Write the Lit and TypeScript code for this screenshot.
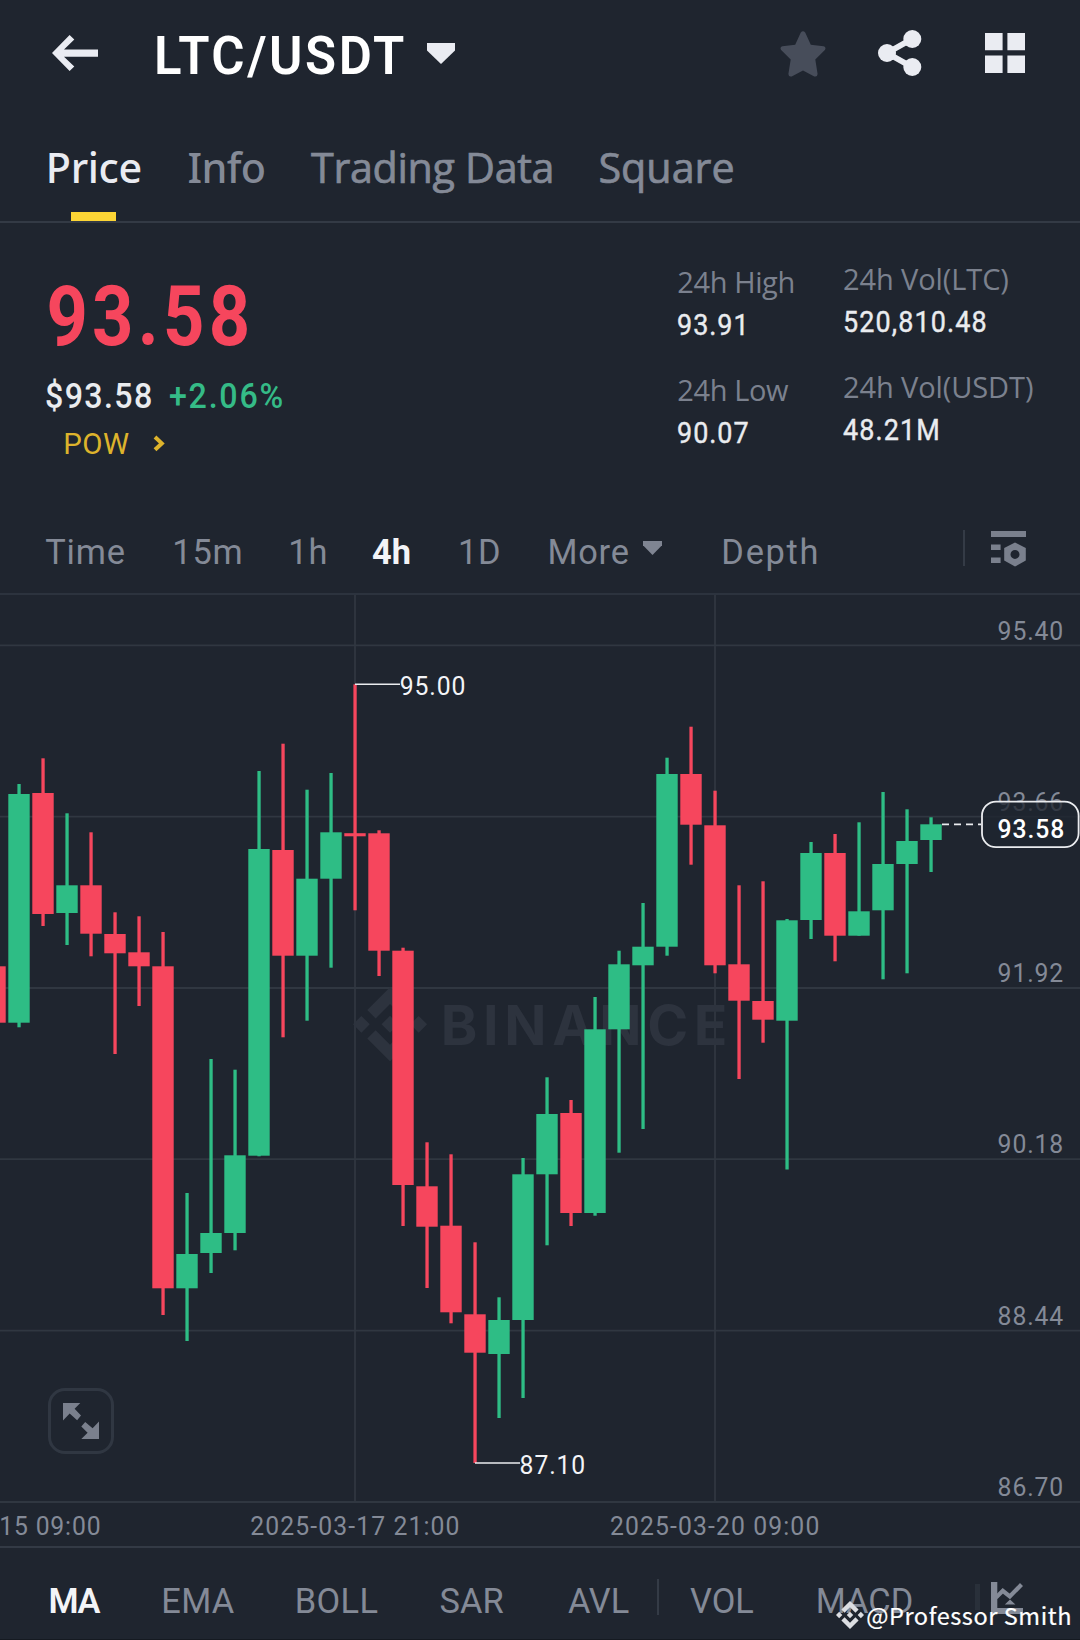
import { LitElement, html, svg, css } from "lit";
import { customElement, state } from "lit/decorators.js";
import { classMap } from "lit/directives/class-map.js";

type Candle = [up: 0 | 1, high: number, top: number, bottom: number, low: number];

const FIRST_X = -5;
const STEP = 24;

const CANDLES: Candle[] = [
  [0, 966.3, 966.3, 1022.7, 1022.7],
  [1, 784, 794, 1022.7, 1027.3],
  [0, 758.3, 793, 914, 926],
  [1, 813.3, 885.3, 913, 945],
  [0, 832.3, 885.3, 933.7, 956.3],
  [0, 912.3, 934, 953.3, 1054],
  [0, 916.3, 952.3, 966.3, 1006],
  [0, 932, 966.3, 1288.3, 1315],
  [1, 1193, 1254, 1288.3, 1341],
  [1, 1059, 1233, 1253, 1273],
  [1, 1069.7, 1155.3, 1233, 1250.3],
  [1, 771, 849, 1155.7, 1156.3],
  [0, 743.7, 850, 955.7, 1037.3],
  [1, 789.7, 878.7, 955.7, 1020.7],
  [1, 773, 832.3, 878.7, 967.7],
  [0, 684.3, 833.2, 836.3, 910.3],
  [0, 830.3, 833.3, 950.7, 976],
  [0, 947.7, 950.7, 1185, 1226],
  [0, 1142.3, 1186.3, 1226.7, 1288],
  [0, 1154.3, 1225.7, 1312.3, 1323.3],
  [0, 1242.3, 1314.3, 1352.7, 1463],
  [1, 1297.3, 1320, 1354, 1418],
  [1, 1158, 1174.3, 1320, 1398],
  [1, 1077.3, 1114, 1174.3, 1245.3],
  [0, 1100, 1113, 1213, 1226],
  [1, 997, 1029.3, 1213, 1215.7],
  [1, 950.7, 964.3, 1029.3, 1152.7],
  [1, 903, 946.7, 965.3, 1129],
  [1, 757.7, 774, 946.7, 955.7],
  [0, 726.7, 774, 824.7, 864.7],
  [0, 790.7, 825.3, 965.3, 973.3],
  [0, 885.3, 964.3, 1000.7, 1079],
  [0, 881.3, 1001, 1019.7, 1042.7],
  [1, 919, 920.3, 1020.7, 1169.5],
  [1, 842, 853, 920, 939],
  [0, 834, 853, 935.7, 961.3],
  [1, 822.3, 911.3, 935.7, 935.7],
  [1, 792, 864, 910.3, 979.3],
  [1, 809.3, 841, 864, 973.3],
  [1, 817.3, 824.3, 840, 872],
];

const SCALE: [string, number][] = [
  ["95.40", 645.3],
  ["93.66", 816.7],
  ["91.92", 988],
  ["90.18", 1159.2],
  ["88.44", 1330.7],
  ["86.70", 1502],
];

const logo = svg`
  <path d="M38.7 53.2 63.3 28.6 87.9 53.2 102.2 38.9 63.3 0 24.4 38.9zM0 63.3 14.3 49 28.6 63.3 14.3 77.6zM38.7 73.4 63.3 98 87.9 73.4 102.2 87.7 63.3 126.6 24.4 87.7zM98 63.3 112.3 49 126.6 63.3 112.3 77.6zM77.8 63.3 63.3 48.8 48.8 63.3 63.3 77.8z" />
`;

@customElement("candle-chart")
export class CandleChart extends LitElement {
  static styles = css`
    :host {
      display: block;
      position: relative;
      height: 951px;
      border-bottom: 2px solid #333a45;
    }
    .plot {
      display: block;
      width: 1080px;
      height: 951px;
      font-family: Roboto, "Liberation Sans", sans-serif;
      font-size: 26.6px;
      letter-spacing: 0.95px;
    }
    .grid { stroke: #303741; stroke-width: 1.8; fill: none; }
    .mark { fill: #2d333e; }
    .mark-text {
      fill: #2d333e;
      font: 700 55.4px Inter, "Open Sans", sans-serif;
      letter-spacing: 5.7px;
    }
    .up { fill: #2ebd85; }
    .down { fill: #f6465d; }
    .scale, .date { fill: #848a97; }
    .date { letter-spacing: 1.2px; }
    .date.edge { letter-spacing: 0.9px; }
    .lead { stroke: #eaecef; stroke-width: 1.6; fill: none; }
    .dash { stroke-dasharray: 7 5; }
    .peak { fill: #f3f4f7; }
    .tag { fill: #1f252f; fill-opacity: 0.78; stroke: #eaecef; stroke-width: 1.8; }
    .last { fill: #fff; font-weight: 500; }
    .expand {
      position: absolute;
      left: 48px;
      top: 793px;
      width: 66px;
      height: 66px;
      box-sizing: border-box;
      padding: 0;
      border: 3px solid #303742;
      border-radius: 17px;
      background: #1f252f;
      display: flex;
      align-items: center;
      justify-content: center;
    }
    .expand svg { width: 36px; height: 36px; fill: #7a808d; }
  `;

  private candle([up, high, top, bottom, low]: Candle, i: number) {
    const x = FIRST_X + i * STEP;
    return svg`<g class=${up ? "up" : "down"}>
      <rect x=${x - 1.6} y=${high} width="3.3" height=${low - high} />
      <rect x=${x - 10.7} y=${top} width="21.4" height=${bottom - top} />
    </g>`;
  }

  /** Axis numerals are set slightly condensed. */
  private numerals(kind: string, x: number, y: number, label: string) {
    return svg`<text class=${kind} transform="translate(${x} ${y}) scale(0.93 1)">${label}</text>`;
  }

  render() {
    return html`
      <svg class="plot" viewBox="0 595 1080 951">
        <path class="grid" d="M355 595V1502M715 595V1502" />
        ${SCALE.map(([, y]) => svg`<path class="grid" d="M0 ${y}H1080" />`)}
        <g class="mark" transform="translate(353 987.3) scale(0.585)">${logo}</g>
        <text class="mark-text" x="440.7" y="1044.7">BINANCE</text>
        ${CANDLES.map((c, i) => this.candle(c, i))}
        ${SCALE.map(([label, y]) => this.numerals("scale", 997.6, y - 5.8, label))}
        <path class="lead" d="M355 684.3H400M475 1463H520" />
        ${this.numerals("peak", 399.8, 695, "95.00")}
        ${this.numerals("peak", 519.6, 1474.3, "87.10")}
        <path class="lead dash" d="M942 824.4H981" />
        <rect class="tag" x="982" y="801.6" width="96.6" height="45.6" rx="14" />
        ${this.numerals("last", 997.6, 838, "93.58")}
        ${this.numerals("date edge", -0.8, 1535, "15 09:00")}
        ${this.numerals("date", 250.2, 1535, "2025-03-17 21:00")}
        ${this.numerals("date", 610, 1535, "2025-03-20 09:00")}
      </svg>
      <button class="expand" aria-label="Expand">
        <svg viewBox="0 0 36 36">
          <path d="M0 0H17.3L11.6 5.7 18 12.6 14.1 17.3 6.7 10.6 0 17.6zM36 36H18.3L24.6 29.8 18.3 23.4 22.2 19 29.6 25.2 36 18.4z" />
        </svg>
      </button>
    `;
  }
}

@customElement("app-root")
export class AppRoot extends LitElement {
  static styles = css`
    :host {
      display: flex;
      flex-direction: column;
      position: relative;
      width: 1080px;
      height: 1640px;
      box-sizing: border-box;
      overflow: hidden;
      background: #1f252f;
      color: #eaecef;
      font-family: Roboto, "Liberation Sans", sans-serif;
      border-bottom: 1px solid #151a21;
    }
    svg { display: block; }
    .header {
      display: grid;
      grid-template-columns: 101.5px 273.5px 353px 97.5px 107.5px 1fr;
      align-items: center;
      height: 106px;
      padding-left: 52px;
      fill: #eaecf2;
    }
    .pair {
      margin: 5px 0 0;
      font-size: 53.6px;
      line-height: 60px;
      font-weight: 600;
      letter-spacing: 2.7px;
      transform: scaleX(0.95);
      transform-origin: left;
      color: #fff;
      white-space: nowrap;
    }
    .star { fill: #474d5a; margin-top: 2px; }
    .tabs {
      display: grid;
      grid-template-columns: 141.8px 123.5px 287.3px 1fr;
      height: 115px;
      padding-left: 45.8px;
      border-bottom: 2px solid #333a45;
      font-family: "Noto Sans", "Open Sans", sans-serif;
      font-size: 41.3px;
      font-weight: 500;
      line-height: 48px;
      color: #848a97;
      white-space: nowrap;
    }
    .tab { display: flex; flex-direction: column; justify-content: space-between; padding-top: 36.5px; letter-spacing: -0.35px; }
    .tab.info { letter-spacing: -0.7px; }
    .tab.data, .tab.square { font-family: "Open Sans", sans-serif; -webkit-text-stroke: 0.7px #848a97; }
    .tab.square { letter-spacing: 0; }
    .tab.on { color: #eaecf2; }
    .tab.on::after {
      content: "";
      width: 45px;
      height: 9px;
      margin-left: 25.2px;
      background: #fcd535;
    }
    .quote {
      display: grid;
      grid-template-columns: 632.3px 165.7px 1fr;
      height: 287px;
      padding-left: 45px;
      white-space: nowrap;
    }
    .main { padding-top: 51.8px; }
    .price {
      padding-left: 1.6px;
      font-size: 83px;
      line-height: 84px;
      font-weight: 700;
      letter-spacing: 4.9px;
      transform: scaleX(0.87);
      transform-origin: left;
      color: #f6465d;
    }
    .sub {
      display: grid;
      grid-template-columns: 123.6px 1fr;
      margin-top: 18.7px;
      padding-left: 0.4px;
      font-size: 35px;
      line-height: 40px;
      font-weight: 500;
      letter-spacing: 1.5px;
    }
    .sub span { transform: scaleX(0.92); transform-origin: left; }
    .gain { color: #35bb87; letter-spacing: 1.9px; }
    .pow {
      display: flex;
      align-items: center;
      gap: 23px;
      margin-top: 10.5px;
      padding-left: 18.2px;
      font-size: 29.4px;
      line-height: 32px;
      letter-spacing: 0.5px;
      color: #ddb32c;
    }
    .stats { padding-top: 40.7px; }
    .stats.vol { padding-top: 37.8px; }
    .label {
      font-family: "Open Sans", sans-serif;
      font-size: 29px;
      line-height: 36px;
      letter-spacing: -0.4px;
      color: #7b818e;
    }
    .vol .label { letter-spacing: -0.1px; }
    .value {
      margin: 7.3px 0 28.8px;
      font-size: 29px;
      line-height: 36px;
      letter-spacing: 1.05px;
      transform: scaleX(0.93);
      transform-origin: left;
      -webkit-text-stroke: 0.4px #eaecef;
    }
    .vol .value { letter-spacing: 1.2px; }
    .times, .indicators {
      display: grid;
      font-size: 34.4px;
      color: #848a97;
      white-space: nowrap;
    }
    .times {
      grid-template-columns: 127px 116px 83.7px 86px 89.4px 95.2px 78.8px 241.6px 28px 1fr;
      height: 83px;
      align-items: center;
      padding-left: 45.3px;
      border-bottom: 2px solid #2c333e;
      letter-spacing: 0.8px;
    }
    .times .caret { fill: #7f8592; margin-top: -8px; }
    .times .on { font-weight: 700; letter-spacing: 0; color: #f3f4f7; }
    .times .depth { letter-spacing: 1.7px; }
    .rule { width: 2px; height: 36px; background: #343b46; margin-top: -7px; }
    .settings { fill: #7a808d; margin-top: -5px; }
    .indicators {
      grid-template-columns: 112.7px 133.5px 144.9px 128.3px 89.6px 32.5px 125.8px 159.7px 15.8px 1fr;
      height: 76px;
      align-items: center;
      padding: 15px 0 0 48.5px;
    }
    .indicators .on { font-weight: 600; letter-spacing: -1.4px; color: #f3f4f7; }
    .indicators .rule { margin-top: -9px; }
    .indicators .rule.faint { width: 5px; height: 26px; background: #29303a; }
    .indicators .wide { letter-spacing: 0.4px; }
    .indicators svg { margin-top: -6px; fill: #848a97; }
    .credit {
      position: absolute;
      right: 8px;
      bottom: 7px;
      display: flex;
      align-items: center;
      gap: 2.5px;
      font-family: "Noto Sans CJK SC", "Open Sans", sans-serif;
      font-size: 23.5px;
      line-height: 34px;
      font-weight: 400;
      letter-spacing: 0.58px;
      color: #fff;
      -webkit-text-stroke: 0.2px #fff;
      fill: #dcdee2;
      white-space: nowrap;
    }
  `;

  @state() private interval = "4h";

  private time(label: string) {
    const classes = { on: this.interval === label, depth: label === "Depth" };
    return html`<span class=${classMap(classes)} @click=${() => (this.interval = label)}>${label}</span>`;
  }

  render() {
    return html`
      <header class="header">
        <svg width="46" height="36" viewBox="0 0 46 36">
          <path d="M0 18 17.6 0 22.3 4.4 12 14.6H46V21.7H12L22.3 31.6 17.6 36z" />
        </svg>
        <h1 class="pair">LTC/USDT</h1>
        <svg width="28" height="21" viewBox="0 0 28 21"><path d="M0 0H28V7.5L14 21 0 7.5z" /></svg>
        <svg class="star" width="46" height="46" viewBox="0 0 46 46">
          <path d="M20.8 1.6Q23-1.2 25.2 1.6L30.8 13.8 43.6 15.2Q46.8 16.4 44.6 19.3L35.3 28.4 37.6 43Q37.3 46.3 34.3 45.4L23 39.6 11.7 45.4Q8.7 46.3 8.4 43L10.7 28.4 1.4 19.3Q-.8 16.4 2.4 15.2L15.2 13.8z" />
        </svg>
        <svg width="44" height="46" viewBox="0 0 44 46">
          <path d="M9 23 34 9M9 23 34 37" stroke="#eaecf2" stroke-width="6" />
          <circle cx="9" cy="23" r="9" /><circle cx="34.3" cy="9" r="9" /><circle cx="34.3" cy="37" r="9" />
        </svg>
        <svg width="40" height="40" viewBox="0 0 40 40"><path d="M0 0H17.6V17.3H0zM22.4 0H40V17.3H22.4zM0 22.4H17.6V40H0zM22.4 22.4H40V40H22.4z" /></svg>
      </header>

      <nav class="tabs">
        <span class="tab on">Price</span>
        <span class="tab info">Info</span>
        <span class="tab data">Trading Data</span>
        <span class="tab square">Square</span>
      </nav>

      <section class="quote">
        <div class="main">
          <div class="price">93.58</div>
          <div class="sub"><span>$93.58</span><span class="gain">+2.06%</span></div>
          <div class="pow">
            POW
            <svg width="12" height="17" viewBox="0 0 12 17"><path d="M2 2 8.8 8.4 2 14.8" fill="none" stroke="#ddb32c" stroke-width="4" /></svg>
          </div>
        </div>
        <div class="stats">
          <div class="label">24h High</div>
          <div class="value">93.91</div>
          <div class="label">24h Low</div>
          <div class="value">90.07</div>
        </div>
        <div class="stats vol">
          <div class="label">24h Vol(LTC)</div>
          <div class="value">520,810.48</div>
          <div class="label">24h Vol(USDT)</div>
          <div class="value">48.21M</div>
        </div>
      </section>

      <nav class="times">
        ${["Time", "15m", "1h", "4h", "1D", "More"].map((t) => this.time(t))}
        <svg class="caret" width="19" height="14" viewBox="0 0 19 14"><path d="M0 0H19V4.2L9.5 14 0 4.2z" /></svg>
        ${this.time("Depth")}
        <i class="rule"></i>
        <svg class="settings" width="36" height="36" viewBox="0 0 36 36">
          <path d="M0 0H35V6H0zM0 13.4H9.6V19H0zM0 26.4H9.6V32H0z" />
          <path fill-rule="evenodd" d="M24 11.4 34.8 17V29.5L24 35.6 13.2 29.5V17zM24 18.9A4.5 4.5 0 1 0 24 27.9 4.5 4.5 0 1 0 24 18.9z" />
        </svg>
      </nav>

      <candle-chart></candle-chart>

      <nav class="indicators">
        <span class="on">MA</span>
        <span class="wide">EMA</span>
        <span class="wide">BOLL</span>
        <span>SAR</span>
        <span>AVL</span>
        <i class="rule"></i>
        <span>VOL</span>
        <span>MACD</span>
        <i class="rule faint"></i>
        <svg width="32" height="32" viewBox="0 0 32 32">
          <path d="M0 0H6.3V26H32V32H0zM13.8 22.4 19 17.4 24.4 22.4z" />
          <path d="M5 15.5 11.8 8.8 18.8 14.5 30.5 2.5" fill="none" stroke="#848a97" stroke-width="4.2" />
        </svg>
      </nav>

      <div class="credit">
        <svg width="28" height="28" viewBox="0 0 126.6 126.6">${logo}</svg>
        @Professor Smith
      </div>
    `;
  }
}
